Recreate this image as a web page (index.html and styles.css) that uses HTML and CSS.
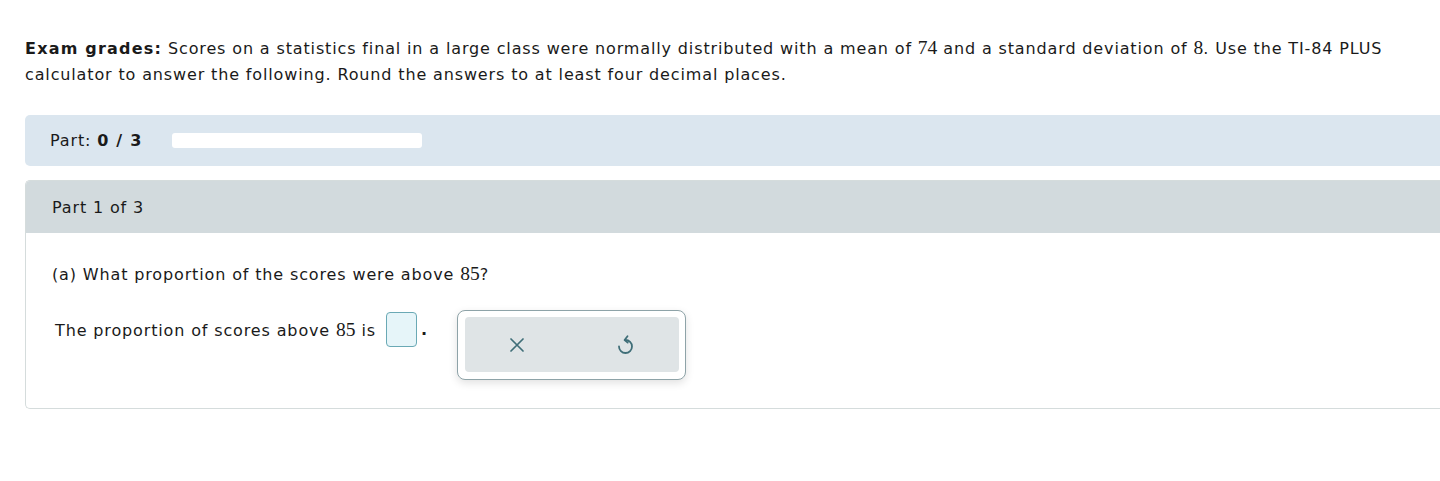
FILE: index.html
```html
<!DOCTYPE html>
<html>
<head>
<meta charset="utf-8">
<link rel="stylesheet" href="styles.css">
</head>
<body>
<div class="page">
  <p class="intro"><b>Exam grades:</b> Scores on a statistics final in a large class were normally distributed with a mean of <span class="m">74</span> and a standard deviation of <span class="m">8</span>. Use the TI-84 PLUS calculator to answer the following. Round the answers to at least four decimal places.</p>

  <div class="progress">
    <span class="plabel">Part: <b>0 / 3</b></span>
    <span class="pbar"></span>
  </div>

  <div class="card">
    <div class="card-head">Part 1 of 3</div>
    <div class="card-body">
      <p class="q">(a) What proportion of the scores were above <span class="m">85</span>?</p>
      <div class="answer">
        <span class="atext">The proportion of scores above <span class="m">85</span> is</span>
        <span class="box"></span>
        <span class="dot">.</span>
        <div class="tools">
          <div class="tools-in">
            <svg class="ic" width="14" height="14" viewBox="0 0 14 14"><path d="M1 1 L13 13 M13 1 L1 13" stroke="#3f6e78" stroke-width="1.7" fill="none" stroke-linecap="round"/></svg>
            <svg class="ic ic2" width="17" height="21" viewBox="0 0 17 21"><path d="M8.5 7 A6.5 6.5 0 1 1 2 13.5" stroke="#3f6e78" stroke-width="1.8" fill="none" stroke-linecap="round"/><path d="M10.5 3.2 L7.6 7 L10.7 9.6" stroke="#3f6e78" stroke-width="1.8" fill="none" stroke-linecap="round" stroke-linejoin="round"/></svg>
          </div>
        </div>
      </div>
    </div>
  </div>
</div>
</body>
</html>
```

FILE: styles.css
```css
html, body { margin: 0; padding: 0; background: #fff; }
body { overflow: hidden; font-family: "DejaVu Sans", Verdana, sans-serif; font-size: 16px; letter-spacing: 0.86px; color: #1a1a1a; }
.page { padding: 35px 0 0 25px; }
.intro { margin: 0 30px 27px 0; line-height: 26px; }
b { font-weight: bold; letter-spacing: 1.2px; }
.m { font-family: "Liberation Serif", "DejaVu Serif", "Times New Roman", serif; font-size: 19.5px; letter-spacing: 0; }
.progress { display: flex; align-items: center; gap: 30px; height: 51px; background: #dbe6ef; border-radius: 5px 0 0 5px; margin-right: -20px; padding-left: 25px; }
.pbar { width: 250px; height: 15px; background: #fff; border-radius: 3px; }
.card { margin-top: 14px; margin-right: -20px; border: 1px solid #d5dcdc; border-right: none; border-radius: 5px 0 0 5px; overflow: hidden; }
.card-head { background: #d2dadd; height: 52px; display: flex; align-items: center; padding-left: 26px; }
.card-body { padding: 28px 0 28px 26px; }
.q { margin: 0; line-height: 26px; }
.answer { display: flex; align-items: flex-start; margin-top: 24px; margin-left: 3px; }
.atext { margin-right: 10px; line-height: 36px; }
.box { width: 29px; height: 33px; background: #e6f5f9; border: 1.5px solid #6aa9b5; border-radius: 4px; }
.dot { margin-left: 4px; margin-right: 29px; font-weight: bold; line-height: 36px; }
.tools { width: 214px; height: 55px; padding: 6px 6px 7px 7px; border: 1px solid #8ea3a8; border-radius: 8px; background: #fff; box-shadow: 0 3px 8px rgba(0,0,0,0.12); margin-top: -2px; }
.tools-in { height: 55px; background: #dfe4e6; border-radius: 4px; display: flex; align-items: center; padding-left: 45px; gap: 93px; }
.ic { display: block; }
.ic2 { margin-top: -3px; }
```
